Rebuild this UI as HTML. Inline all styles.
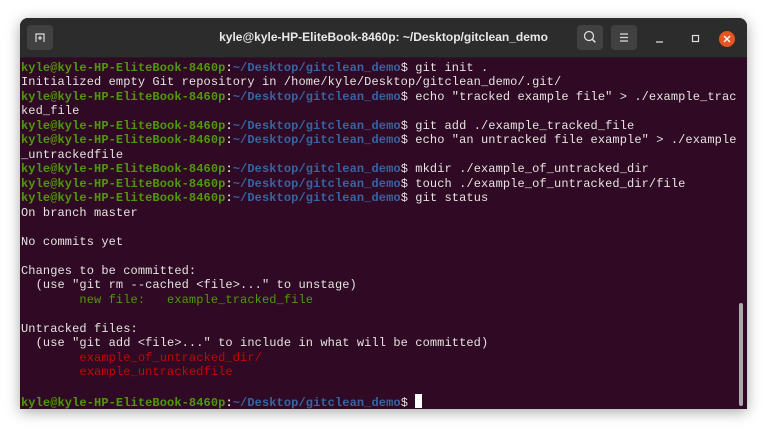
<!DOCTYPE html>
<html><head><meta charset="utf-8"><style>
html,body{margin:0;padding:0;width:768px;height:432px;background:#fff;overflow:hidden}
.win{position:absolute;left:20px;top:18px;width:727px;height:391px;background:#300a24;border-radius:8px 8px 0 0;box-shadow:0 3px 14px rgba(0,0,0,.35);overflow:hidden}
.tb{position:absolute;left:0;top:0;width:727px;height:39px;background:#2c2c2c;border-bottom:1px solid #1f1f1f}
.title{position:absolute;left:0;right:0;top:12px;text-align:center;color:#e8e8e8;font:bold 12px "Liberation Sans",sans-serif}
.btn{position:absolute;top:7px;width:26px;height:25px;background:#414141;border-radius:4px}
.term{position:absolute;left:1px;top:43px;font:12px/14.48px "Liberation Mono",monospace;letter-spacing:0.1px;color:#e4e4e0;white-space:pre}
.g{color:#4e9a06}.b{color:#3465a4}.r{color:#cc0000}
.p{font-weight:bold}
.cur{display:inline-block;width:7px;height:14px;background:#fff;vertical-align:-2px}
.sb{position:absolute;left:719px;top:285px;width:4px;height:103px;background:#aaa;border-radius:2px}
</style></head><body>
<div class="win">
<div class="tb">
<div class="btn" style="left:7px"><svg width="26" height="25"><path d="M9 17V9h8v8M11 13h4M13 11v4" stroke="#ddd" stroke-width="1.2" fill="none"/></svg></div>
<div class="title">kyle@kyle-HP-EliteBook-8460p: ~/Desktop/gitclean_demo</div>
<div class="btn" style="left:557px"><svg width="26" height="25"><circle cx="12" cy="11" r="4.5" stroke="#ddd" stroke-width="1.3" fill="none"/><path d="M15.3 14.3l3 3" stroke="#ddd" stroke-width="1.5"/></svg></div>
<div class="btn" style="left:591px"><svg width="26" height="25"><path d="M9 9h8M9 12.5h8M9 16h8" stroke="#ddd" stroke-width="1.2"/></svg></div>
<svg style="position:absolute;left:630px;top:10px" width="90" height="22"><path d="M6 14h7" stroke="#ddd" stroke-width="1.3"/><rect x="42.5" y="7.5" width="6" height="6" stroke="#ddd" stroke-width="1.2" fill="none"/><circle cx="77" cy="11" r="8" fill="#e95420"/><path d="M74 8l6 6M80 8l-6 6" stroke="#fff" stroke-width="1.4"/></svg>
</div>
<div class="term"><span class="g p">kyle@kyle-HP-EliteBook-8460p</span><span class="p">:</span><span class="b p">~/Desktop/gitclean_demo</span>$ git init .
Initialized empty Git repository in /home/kyle/Desktop/gitclean_demo/.git/
<span class="g p">kyle@kyle-HP-EliteBook-8460p</span><span class="p">:</span><span class="b p">~/Desktop/gitclean_demo</span>$ echo "tracked example file" &gt; ./example_trac
ked_file
<span class="g p">kyle@kyle-HP-EliteBook-8460p</span><span class="p">:</span><span class="b p">~/Desktop/gitclean_demo</span>$ git add ./example_tracked_file
<span class="g p">kyle@kyle-HP-EliteBook-8460p</span><span class="p">:</span><span class="b p">~/Desktop/gitclean_demo</span>$ echo "an untracked file example" &gt; ./example
_untrackedfile
<span class="g p">kyle@kyle-HP-EliteBook-8460p</span><span class="p">:</span><span class="b p">~/Desktop/gitclean_demo</span>$ mkdir ./example_of_untracked_dir
<span class="g p">kyle@kyle-HP-EliteBook-8460p</span><span class="p">:</span><span class="b p">~/Desktop/gitclean_demo</span>$ touch ./example_of_untracked_dir/file
<span class="g p">kyle@kyle-HP-EliteBook-8460p</span><span class="p">:</span><span class="b p">~/Desktop/gitclean_demo</span>$ git status
On branch master

No commits yet

Changes to be committed:
  (use "git rm --cached &lt;file&gt;..." to unstage)
<span class="g">        new file:   example_tracked_file</span>

Untracked files:
  (use "git add &lt;file&gt;..." to include in what will be committed)
<span class="r">        example_of_untracked_dir/</span>
<span class="r">        example_untrackedfile</span>

<span class="g p">kyle@kyle-HP-EliteBook-8460p</span><span class="p">:</span><span class="b p">~/Desktop/gitclean_demo</span>$ <span class="cur"></span></div>
<div class="sb"></div>
</div>
</body></html>
